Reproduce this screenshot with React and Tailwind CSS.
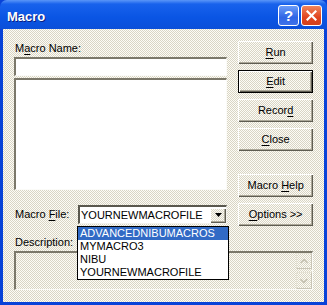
import { ChevronUp, ChevronDown } from 'lucide-react'

const face = 'bg-[image:repeating-conic-gradient(#fdfcf6_0_25%,#d9d5c5_0_50%)] bg-[length:2px_2px]'
const bevel = 'shadow-[inset_1px_1px_#ffffff,inset_-1px_-1px_#5f5d52,inset_-2px_-2px_#aca899]'
const sunken = 'border-t-2 border-l-2 border-t-[#7b786a] border-l-[#7b786a] border-r border-b border-r-[#fbfbf8] border-b-[#fbfbf8]'

function Btn({ children, isDefault, className = '' }) {
  return (
    <div className={`h-[23px] w-full flex items-center justify-center text-[11px] text-black ${face} ${bevel} ${isDefault ? 'border border-black' : ''} ${className}`}>
      <span>{children}</span>
    </div>
  )
}

function Acc({ children }) {
  return <span className="underline underline-offset-[2px]">{children}</span>
}

const files = ['ADVANCEDNIBUMACROS', 'MYMACRO3', 'NIBU', 'YOURNEWMACROFILE']

export default function App() {
  return (
    <div className="w-[327px] h-[305px] flex flex-col bg-[#0842d8] font-['Liberation_Sans',Arial,sans-serif] select-none">
      {/* title bar */}
      <div className="h-[29px] flex items-start justify-between pl-[7px] pr-[5px] pt-[5px] rounded-t-[7px] bg-[image:linear-gradient(180deg,#5a96f8_0%,#1862ec_14%,#0a55e4_60%,#0b4fd9_100%)]">
        <span className="mt-[1px] leading-[21px] text-[13px] font-bold text-white [text-shadow:1px_1px_#0a1e80]">Macro</span>
        <div className="flex gap-[2px]">
          <div className="w-[21px] h-[21px] rounded-[3px] border border-white flex items-center justify-center bg-[image:linear-gradient(180deg,#6b9cf8,#2f66e6_60%,#3f72ea)]">
            <span className="text-white font-bold text-[15px] leading-none">?</span>
          </div>
          <div className="w-[21px] h-[21px] rounded-[3px] border border-white flex items-center justify-center bg-[image:linear-gradient(180deg,#f0865c,#e0441f_60%,#d2401c)]">
            <svg width="11" height="11" viewBox="0 0 11 11">
              <path d="M1.5 1.5 L9.5 9.5 M9.5 1.5 L1.5 9.5" stroke="#fff" strokeWidth="2.2" strokeLinecap="square" />
            </svg>
          </div>
        </div>
      </div>

      {/* body */}
      <div className={`flex-1 mx-[3px] mb-[3px] px-[11px] flex flex-col text-[11px] text-black ${face}`}>
        <div className="flex">
          <div className="w-[214px] flex flex-col">
            <div className="mt-[12px] h-[14px] leading-[14px] pl-[1px]">M<Acc>a</Acc>cro Name:</div>
            <div className={`mt-[2px] h-[19px] bg-white ${sunken}`} />
            <div className={`mt-[2px] h-[112px] bg-white ${sunken}`} />
            <div className="mt-[15px] flex items-center h-[19px]">
              <div className="w-[64px] pl-[1px]">Macro <Acc>F</Acc>ile:</div>
              <div className="relative w-[149px] h-[19px]">
                <div className="h-full flex items-center bg-white border-t-2 border-l-2 border-t-[#5a584e] border-l-[#5a584e] border-r border-b border-r-[#f4f3ee] border-b-[#f4f3ee]">
                  <span className="flex-1 pl-[1px] leading-[15px]">YOURNEWMACROFILE</span>
                  <div className={`w-[16px] h-[15px] flex items-center justify-center ${face} ${bevel}`}>
                    <svg width="7" height="4" viewBox="0 0 7 4"><path d="M0 0 H7 L3.5 4 Z" fill="#000" /></svg>
                  </div>
                </div>
                <div className="absolute left-[-1px] top-[21px] w-[152px] bg-white border border-black z-10">
                  {files.map((f, i) => (
                    <div key={f} className={`h-[13px] leading-[13px] pl-[2px] ${i === 0 ? 'bg-[#316ac5] text-white' : 'text-black'}`}>{f}</div>
                  ))}
                </div>
              </div>
            </div>
          </div>

          <div className="ml-[11px] w-[75px] flex flex-col pt-[12px]">
            <Btn><Acc>R</Acc>un</Btn>
            <Btn isDefault className="mt-[6px]"><Acc>E</Acc>dit</Btn>
            <Btn className="mt-[6px]">Recor<Acc>d</Acc></Btn>
            <Btn className="mt-[6px]"><Acc>C</Acc>lose</Btn>
            <Btn className="mt-[23px]">Macro <Acc>H</Acc>elp</Btn>
            <Btn className="mt-[6px]"><Acc>O</Acc>ptions &gt;&gt;</Btn>
          </div>
        </div>

        <div className="mt-[9px] h-[14px] leading-[14px] pl-[1px]">Description:</div>
        <div className={`mt-[2px] w-[299px] h-[39px] flex justify-end ${sunken}`}>
          <div className="flex flex-col gap-[3px]">
            <div className="w-[16px] h-[16px] border border-[#e6e3d6] border-b-[#c9c5b6] border-r-[#c9c5b6] flex items-center justify-center">
              <ChevronUp className="w-[12px] h-[12px] text-[#c4c0b0]" strokeWidth={3} />
            </div>
            <div className="w-[16px] h-[17px] border border-[#e6e3d6] border-b-[#c9c5b6] border-r-[#c9c5b6] flex items-center justify-center">
              <ChevronDown className="w-[12px] h-[12px] text-[#c4c0b0]" strokeWidth={3} />
            </div>
          </div>
        </div>
      </div>
    </div>
  )
}
